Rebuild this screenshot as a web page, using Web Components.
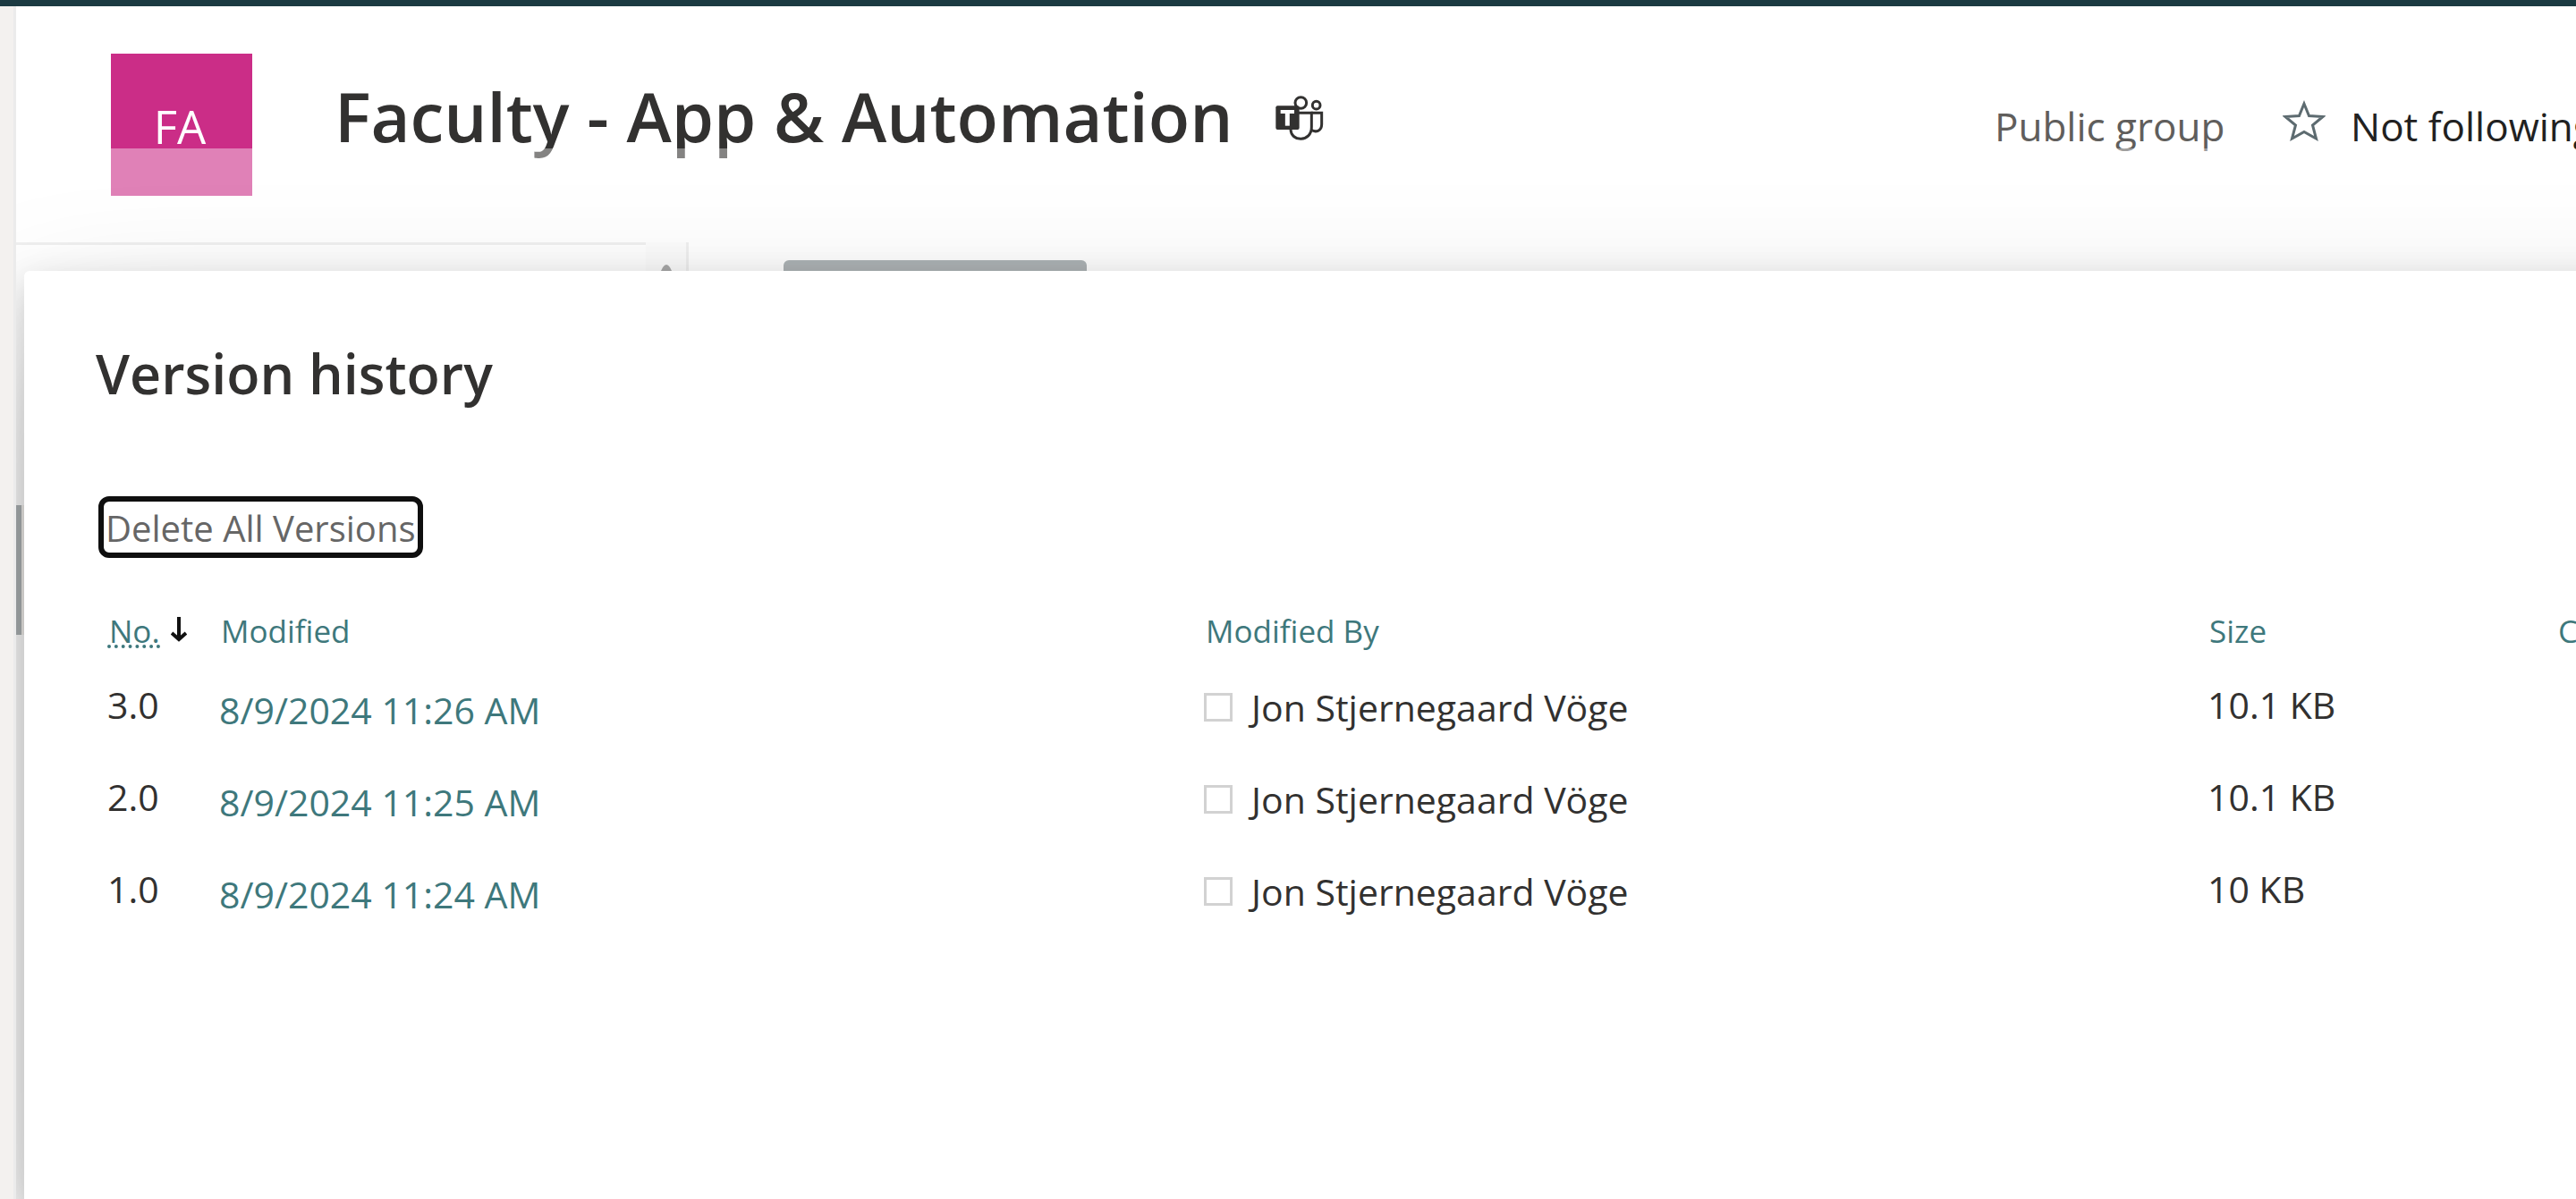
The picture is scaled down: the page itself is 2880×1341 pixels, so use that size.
<!DOCTYPE html>
<html lang="en">
<head>
<meta charset="utf-8">
<title>Faculty - App &amp; Automation</title>
<style>
    html, body {
        height: 100%;
        margin: 0;
    }
    body {
        font-family: "Segoe UI", "Open Sans", "Noto Sans", sans-serif;
        color: #323130;
        background: #ffffff;
        overflow: hidden;
    }
</style>
</head>
<body>
<site-shell>
    <group-header slot="header" initials="FA">
        Faculty - App &amp; Automation
        <span slot="privacy">Public group</span>
        <span slot="follow">Not following</span>
    </group-header>
    <version-dialog slot="dialog">
        <span slot="title">Version history</span>
        <version-table></version-table>
    </version-dialog>
</site-shell>

<script>
class SiteShell extends HTMLElement {
    constructor() {
        super();
        this.shadowDOM = this.attachShadow({ mode: "open" });
    }

    connectedCallback() {
        this.shadowDOM.innerHTML = `
        <style>
            :host {
                display: flex;
                flex-direction: column;
                height: 100%;
            }
            .suite {
                flex: none;
                height: 7px;
                background: #1b3a42;
            }
            .body {
                display: flex;
                flex: 1;
                min-height: 0;
            }
            .rail {
                flex: none;
                width: 15px;
                background: #f3f1ef;
                border-right: 3px solid #ebebeb;
            }
            main {
                position: relative;
                flex: 1;
                min-width: 0;
                overflow: hidden;
                display: flex;
                flex-direction: column;
            }
            .content {
                display: flex;
                flex: 1;
                align-items: stretch;
            }
            nav {
                width: 704px;
                border-top: 3px solid #e6e6e6;
            }
            .thumb {
                width: 6px;
                height: 145px;
                margin-top: 291px;
                background: #788386;
                border-right: 3px solid #f0ece6;
            }
            .scroll {
                width: 45px;
                border-right: 3px solid #e6e6e6;
                background: #fafafa;
                text-align: center;
            }
            .scroll svg {
                display: block;
                margin: 24px auto 0;
            }
            .command {
                width: 339px;
                height: 96px;
                margin: 20px 0 0 106px;
                background: #788386;
                border-radius: 6px;
            }
            /* veil and dialog lie over the page */
            .veil {
                position: absolute;
                inset: 159px 0 0 0;
                background: rgba(255, 255, 255, .4);
            }
            ::slotted(version-dialog) {
                position: absolute;
                inset: 296px -240px 0 9px;
            }
        </style>
        <div class="suite"></div>
        <div class="body">
            <div class="rail"></div>
            <main>
                <slot name="header"></slot>
                <div class="content">
                    <nav><div class="thumb"></div></nav>
                    <div class="scroll">
                        <svg width="20" height="16" viewBox="0 0 20 16"><path d="M0 16 L6 4 Q10 -2 14 4 L20 16Z" fill="#707070"/></svg>
                    </div>
                    <div class="command"></div>
                </div>
                <div class="veil"></div>
                <slot name="dialog"></slot>
            </main>
        </div>`;
    }
}

class GroupHeader extends HTMLElement {
    constructor() {
        super();
        this.shadowDOM = this.attachShadow({ mode: "open" });
    }

    connectedCallback() {
        this.shadowDOM.innerHTML = `
        <style>
            :host {
                display: flex;
                flex: none;
                align-items: flex-start;
                box-sizing: border-box;
                height: 264px;
                padding: 53px 0 0 106px;
                white-space: nowrap;
            }
            .avatar {
                flex: none;
                box-sizing: border-box;
                width: 158px;
                height: 159px;
                padding: 2px 4px 0 0;
                background: #cb2d87;
                color: #ffffff;
                font-size: 51px;
                line-height: 159px;
                text-align: center;
            }
            h1 {
                flex: 1;
                display: flex;
                align-items: center;
                gap: 48px;
                margin: 0 0 0 92px;
                font-size: 76px;
                font-weight: 600;
                line-height: 140px;
            }
            h1 svg {
                margin-top: 4px;
            }
            .actions {
                flex: none;
                display: flex;
                align-items: center;
                width: 650px;
                font-size: 44px;
                line-height: 162px;
            }
            .privacy {
                flex: none;
                width: 322px;
                color: #605e5c;
            }
            button {
                flex: none;
                display: flex;
                align-items: center;
                gap: 28px;
                padding: 0;
                border: 0;
                background: none;
                font: inherit;
                color: #212121;
            }
            button svg {
                margin-bottom: 12px;
            }
        </style>
        <div class="avatar">${this.getAttribute("initials")}</div>
        <h1>
            <span><slot></slot></span>
            <svg width="54" height="50" viewBox="136 80 162 150" fill="none" stroke="#323130" stroke-width="9">
                <path d="M214 138H257V186C257 237 187 237 187 192"/>
                <path d="M255 138H291V176C291 200 270 204 256 195"/>
                <circle cx="221" cy="104" r="19"/>
                <circle cx="273" cy="112" r="13"/>
                <rect x="137" y="114" width="79" height="80" rx="6" fill="#323130" stroke="none"/>
                <path d="M153 134H199" stroke="#ffffff" stroke-width="12"/>
                <path d="M176 134V181" stroke="#ffffff" stroke-width="15"/>
            </svg>
        </h1>
        <div class="actions">
            <span class="privacy"><slot name="privacy"></slot></span>
            <button type="button">
                <svg width="48" height="46" viewBox="0 0 48 46" fill="none" stroke="#5d6b70" stroke-width="3">
                    <path d="M24 4L29.500 17.500L45 18.500L33.500 28L37.500 43L24 35.500L10.500 43L14.500 28L3 18.500L18.500 17.500Z"/>
                </svg>
                <slot name="follow"></slot>
            </button>
        </div>`;
    }
}

class VersionDialog extends HTMLElement {
    constructor() {
        super();
        this.shadowDOM = this.attachShadow({ mode: "open" });
    }

    connectedCallback() {
        this.shadowDOM.innerHTML = `
        <style>
            :host {
                display: block;
                overflow: hidden;
                background: #ffffff;
                border-radius: 6px 0 0 0;
                box-shadow: 0 77px 172px rgba(0, 0, 0, .22), 0 14px 43px rgba(0, 0, 0, .18);
            }
            h2 {
                margin: 72px 0 94px 80px;
                font-size: 61px;
                font-weight: 600;
                line-height: 86px;
            }
            button {
                display: block;
                margin: 0 0 44px 83px;
                padding: 2px 2px 0 2px;
                border: 6px solid #0f0f0f;
                border-radius: 12px;
                background: none;
                font: inherit;
                font-size: 40px;
                line-height: 55px;
                color: #666666;
            }
        </style>
        <h2><slot name="title"></slot></h2>
        <button type="button">Delete All Versions</button>
        <slot></slot>`;
    }
}

const versions = [
    { no: "3.0", modified: "8/9/2024 11:26 AM", by: "Jon Stjernegaard Vöge", size: "10.1 KB" },
    { no: "2.0", modified: "8/9/2024 11:25 AM", by: "Jon Stjernegaard Vöge", size: "10.1 KB" },
    { no: "1.0", modified: "8/9/2024 11:24 AM", by: "Jon Stjernegaard Vöge", size: "10 KB" }
];

class VersionTable extends HTMLElement {
    constructor() {
        super();
        this.shadowDOM = this.attachShadow({ mode: "open" });
    }

    row(version) {
        return `
            <tr>
                <td>${version.no}</td>
                <td class="date"><a href="#">${version.modified}</a></td>
                <td><label><input type="checkbox">${version.by}</label></td>
                <td>${version.size}</td>
                <td></td>
            </tr>`;
    }

    connectedCallback() {
        this.shadowDOM.innerHTML = `
        <style>
            :host {
                display: block;
                margin-left: 93px;
            }
            table {
                width: 100%;
                table-layout: fixed;
                border-collapse: collapse;
                white-space: nowrap;
            }
            .no { width: 125px; }
            .modified { width: 36.7%; }
            .by { width: 37.4%; }
            .size { width: 13%; }
            th, td {
                padding: 0;
                text-align: left;
                vertical-align: top;
                font-weight: 400;
            }
            th {
                height: 77px;
                font-size: 35px;
                line-height: 76px;
            }
            td {
                height: 103px;
                font-size: 41px;
                line-height: 86px;
            }
            .date { line-height: 98px; }
            a {
                color: #3e787c;
                text-decoration: none;
            }
            th a { padding-left: 2px; }
            .sorted {
                display: flex;
                align-items: center;
                gap: 12px;
                box-sizing: border-box;
                height: 76px;
                padding-top: 4px;
            }
            .sorted a {
                line-height: 30px;
                border-bottom: 4px dotted #3e787c;
            }
            .sorted svg {
                margin-bottom: 8px;
            }
            label {
                display: flex;
                align-items: center;
                gap: 21px;
                line-height: 92px;
            }
            input {
                appearance: none;
                box-sizing: border-box;
                width: 32px;
                height: 32px;
                margin: 0;
                border: 3px solid #d2d2d2;
                background: #ffffff;
            }
        </style>
        <table>
            <colgroup>
                <col class="no"><col class="modified"><col class="by"><col class="size"><col>
            </colgroup>
            <thead>
                <tr>
                    <th><span class="sorted"><a href="#">No.</a>
                        <svg width="18" height="28" viewBox="0 0 18 28" fill="none" stroke="#111111" stroke-width="4">
                            <path d="M9 0V26M1 18L9 25L17 18"/>
                        </svg></span></th>
                    <th><a href="#">Modified</a></th>
                    <th><a href="#">Modified By</a></th>
                    <th><a href="#">Size</a></th>
                    <th><a href="#">Comments</a></th>
                </tr>
            </thead>
            <tbody>${versions.map(this.row).join("")}</tbody>
        </table>`;
    }
}

customElements.define("site-shell", SiteShell);
customElements.define("group-header", GroupHeader);
customElements.define("version-dialog", VersionDialog);
customElements.define("version-table", VersionTable);
</script>
</body>
</html>
